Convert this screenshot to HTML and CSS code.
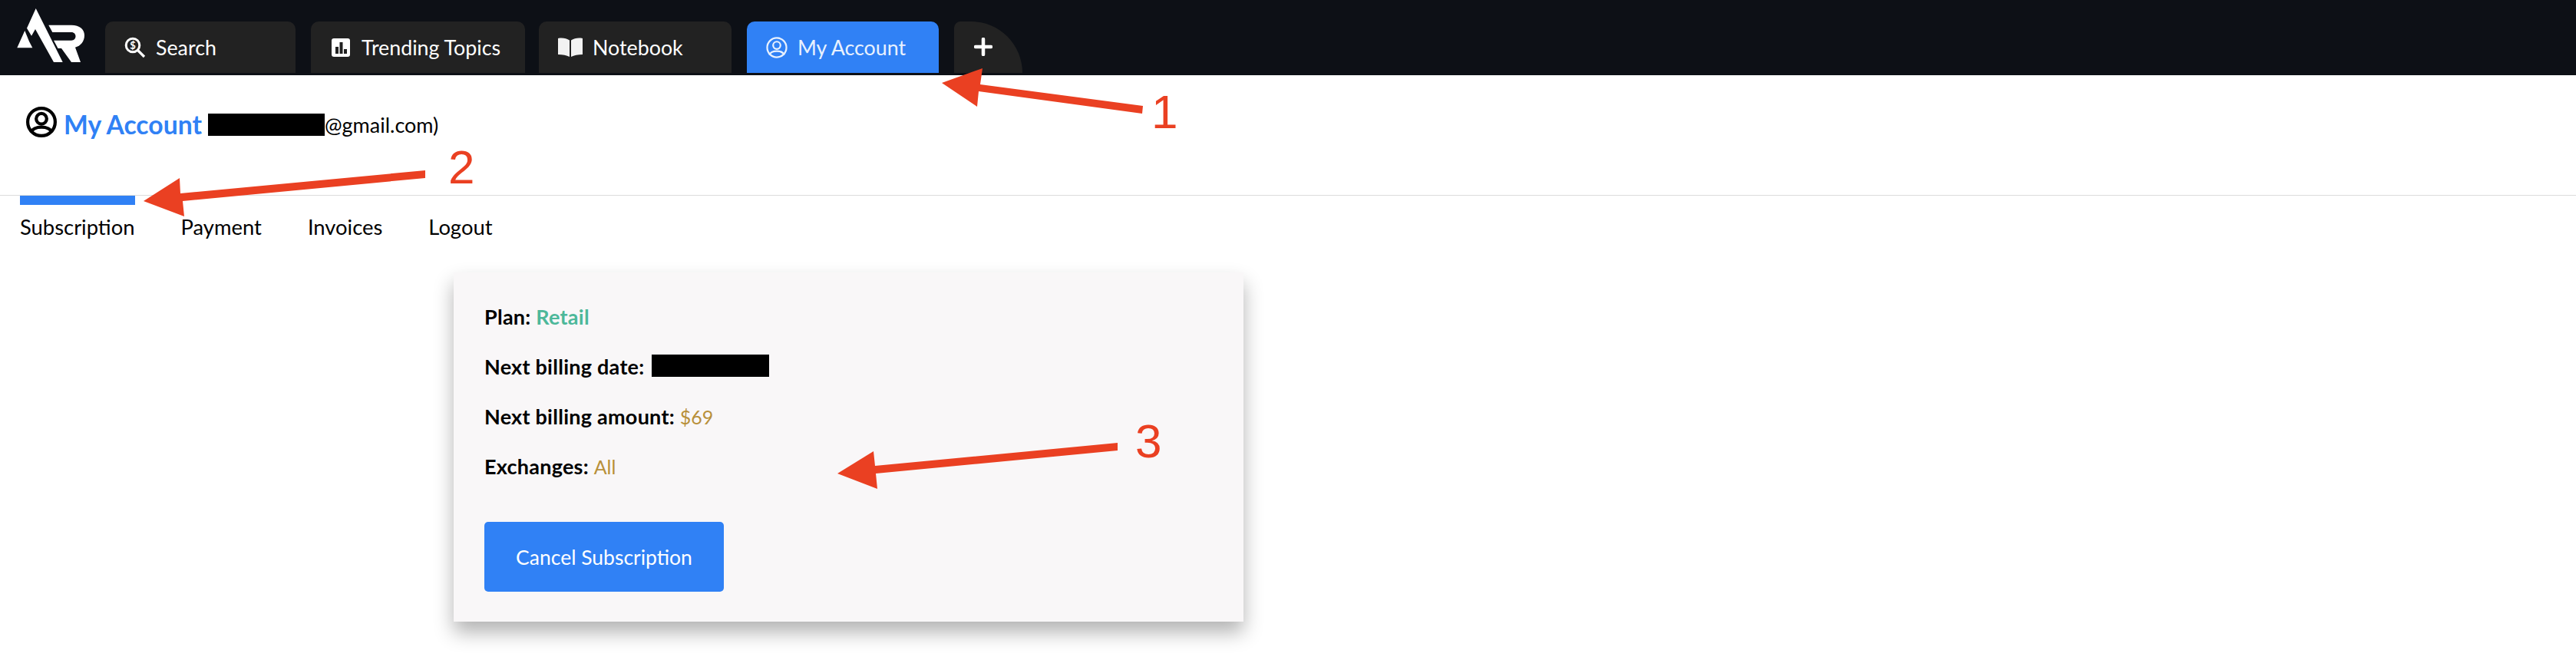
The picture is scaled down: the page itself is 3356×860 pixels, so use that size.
FILE: index.html
```html
<!DOCTYPE html>
<html lang="en">
<head>
    <meta charset="UTF-8">
    <meta name="viewport" content="width=device-width, initial-scale=1.0">
    <title>My Account</title>
    <link rel="stylesheet" href="styles.css">
</head>
<body>
    <div class="topbar">
        <svg class="logo" viewBox="15 5 105 90">
            <path d="M46.7 11 L35 36.7 L41 46.7 L46 38 L70 81 L81.7 81 Z" fill="#fff"/>
            <path d="M32.3 40 L22.3 62.3 L42.3 62.3 L38 54 Z" fill="#fff"/>
            <path d="M63.3 32.7 L93 32.7 C104 33 110 38 110 46 C110 54 105 60 98 61.7 L105 81 L93 81 L80 63 L75.5 63 L70 52.7 L93 52.7 C96.5 52.7 98.5 50 98.5 47.3 C98.5 44.5 96.5 42 93 42 L68.3 42 Z" fill="#fff"/>
        </svg>
        <div class="tab tab-search">
            <svg class="tab-icon" viewBox="0 0 28 28">
                <circle cx="11" cy="11" r="8.8" fill="none" stroke="#fff" stroke-width="3"/>
                <line x1="17.5" y1="17.5" x2="26" y2="26" stroke="#fff" stroke-width="3.2"/>
                <text x="11" y="15.5" class="dollar">$</text>
            </svg>
            Search
        </div>
        <div class="tab tab-trending">
            <svg class="tab-icon" viewBox="0 0 28 28">
                <rect x="2" y="2" width="24" height="24" rx="3" fill="#fff"/>
                <rect x="7" y="13" width="4" height="9" fill="#222"/>
                <rect x="12.5" y="7" width="4" height="15" fill="#222"/>
                <rect x="18" y="16" width="4" height="6" fill="#222"/>
            </svg>
            Trending Topics
        </div>
        <div class="tab tab-notebook">
            <svg class="tab-icon book" viewBox="0 0 32 26">
                <path d="M0 1 C6 0 11 1 15 3.5 L15 25 C11 23 6 22 0 22 Z" fill="#f2f2f2"/>
                <path d="M32 1 C26 0 21 1 17 3.5 L17 25 C21 23 26 22 32 22 Z" fill="#f2f2f2"/>
            </svg>
            Notebook
        </div>
        <div class="tab tab-account active">
            <svg class="tab-icon" viewBox="0 0 38 38">
                <circle cx="19" cy="19" r="17" fill="none" stroke="currentColor" stroke-width="3"/>
                <circle cx="19" cy="15" r="6.5" fill="none" stroke="currentColor" stroke-width="3"/>
                <path d="M6 32 C9 23 29 23 32 32" fill="none" stroke="currentColor" stroke-width="3"/>
            </svg>
            My Account
        </div>
        <div class="tab-add">
            <svg viewBox="0 0 24 24" class="plus">
                <path d="M12 2 V22 M2 12 H22" stroke="#fff" stroke-width="4.5" stroke-linecap="round"/>
            </svg>
        </div>
    </div>

    <div class="account-head">
        <svg class="account-icon" viewBox="0 0 38 38">
            <circle cx="19" cy="19" r="17" fill="none" stroke="#000" stroke-width="4"/>
            <circle cx="19" cy="15" r="6.5" fill="none" stroke="#000" stroke-width="4"/>
            <path d="M6 32 C9 23 29 23 32 32" fill="none" stroke="#000" stroke-width="4"/>
        </svg>
        <span class="account-title">My Account</span>
        <span class="redacted redacted-email"></span>
        <span class="account-email">@gmail.com)</span>
    </div>

    <div class="subnav">
        <div class="subnav-item active">Subscription</div>
        <div class="subnav-item">Payment</div>
        <div class="subnav-item">Invoices</div>
        <div class="subnav-item">Logout</div>
    </div>

    <div class="card">
        <div class="row">Plan: <span class="green">Retail</span></div>
        <div class="row">Next billing date: <span class="redacted redacted-date"></span></div>
        <div class="row">Next billing amount: <span class="gold">$69</span></div>
        <div class="row">Exchanges: <span class="gold">All</span></div>
        <button class="cancel-btn">Cancel Subscription</button>
    </div>

    <!-- annotations drawn over the screenshot -->
    <svg class="arrows" viewBox="0 0 3356 860">
        <polygon points="1227,108 1280,89 1277,110 1489,138 1488,148 1275,119 1273,139"/>
        <polygon points="187,262 234,232 235,252 554,222 554,232 238,262 240,282"/>
        <polygon points="1091,617 1138,588 1140,607 1456,577 1456,587 1141,617 1143,637"/>
    </svg>
    <div class="note note-1">1</div>
    <div class="note note-2">2</div>
    <div class="note note-3">3</div>
</body>
</html>
```

FILE: styles.css
```css
* {
    margin: 0;
    padding: 0;
    box-sizing: border-box;
}

body {
    font-family: Lato, 'Open Sans', sans-serif;
    background: #fff;
    color: #000;
    height: 860px;
    overflow: hidden;
    position: relative;
}

.topbar {
    height: 98px;
    background: #0d1016;
    display: flex;
    align-items: flex-end;
    padding: 0 0 3px 15px;
}

.logo {
    width: 105px;
    height: 90px;
    margin: 0 17px 0 0;
    align-self: flex-start;
    margin-top: 5px;
}

.tab {
    height: 67px;
    background: #222222;
    border-radius: 10px 10px 0 0;
    color: #fff;
    font-size: 26.8px;
    display: flex;
    align-items: center;
    padding-left: 25px;
    margin-right: 20px;
}

.tab-search { width: 248px; }
.tab-trending { width: 279px; }
.tab-notebook { width: 251px; margin-left: -2px; }
.tab-account { width: 250px; }

.tab.active {
    background: #3081f5;
    color: #e8f1fe;
}

.tab-icon {
    width: 28px;
    height: 28px;
    margin-right: 13px;
    flex: none;
}

.tab-icon.book {
    width: 32px;
    height: 26px;
}

.dollar {
    fill: #fff;
    font-size: 13px;
    font-weight: bold;
    text-anchor: middle;
}

.tab-add {
    width: 89px;
    height: 67px;
    background: #222222;
    border-radius: 10px 80px 0 0;
    padding: 21px 0 0 26px;
}

.plus {
    width: 24px;
    height: 24px;
    display: block;
}

.account-head {
    height: 156px;
    padding: 40px 0 0 34px;
    display: flex;
    align-items: flex-start;
}

.account-icon {
    width: 40px;
    height: 40px;
    flex: none;
    margin-right: 9px;
    margin-top: 1px;
}

.account-title {
    color: #3081f5;
    font-size: 33.7px;
    font-weight: bold;
    line-height: 48px;
    margin-right: 8px;
}

.account-email {
    font-size: 27px;
    line-height: 50px;
}

.redacted {
    background: #000;
    display: inline-block;
}

.redacted-email {
    width: 152px;
    height: 29px;
    margin-top: 10px;
}

.redacted-date {
    width: 153px;
    height: 29px;
    vertical-align: -3px;
    margin-left: 3px;
}

.subnav {
    border-top: 1px solid #dcdcdc;
    padding-left: 26px;
    display: flex;
    gap: 60px;
}

.subnav-item {
    border-top: 12px solid transparent;
    padding-top: 12px;
    font-size: 27.4px;
    line-height: 34px;
}

.subnav-item.active {
    border-top-color: #3081f5;
}

.card {
    width: 1029px;
    height: 455px;
    margin: 42px 0 0 591px;
    padding: 40px 40px;
    background: #f9f7f8;
    box-shadow: 0 14px 24px rgba(0, 0, 0, 0.3);
}

.row {
    font-size: 27px;
    letter-spacing: 0.25px;
    font-weight: bold;
    line-height: 35px;
    margin-bottom: 30px;
    height: 35px;
}

.green {
    color: #4db89a;
}

.gold {
    color: #b8903a;
    font-weight: normal;
    font-size: 25px;
    letter-spacing: 0;
}

.cancel-btn {
    display: block;
    width: 312px;
    height: 91px;
    margin-top: 55px;
    background: #3081f5;
    color: #fff;
    border: none;
    border-radius: 5px;
    font-family: inherit;
    font-size: 26.5px;
}

.arrows {
    position: absolute;
    left: 0;
    top: 0;
    width: 3356px;
    height: 860px;
    fill: #ea4022;
}

.note {
    position: absolute;
    font-family: 'Liberation Sans', Arial, sans-serif;
    font-size: 62px;
    line-height: 62px;
    color: #ea4022;
}

.note-1 { left: 1500px; top: 115px; }
.note-2 { left: 584px; top: 187px; }
.note-3 { left: 1479px; top: 544px; }
```
